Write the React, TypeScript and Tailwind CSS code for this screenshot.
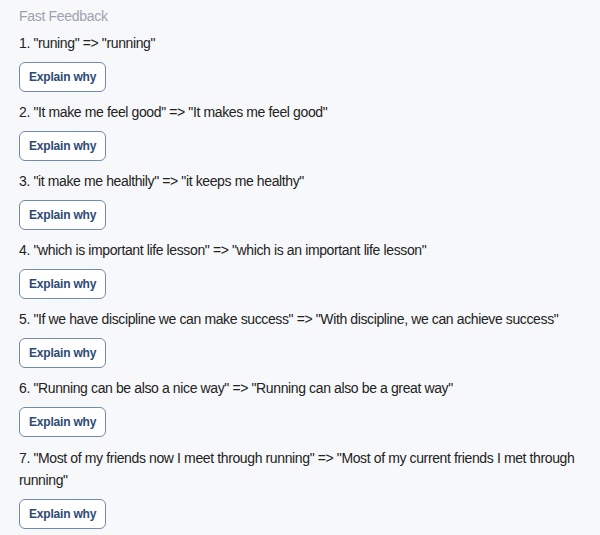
const items: [string, string][] = [
  ["runing", "running"],
  ["It make me feel good", "It makes me feel good"],
  ["it make me healthily", "it keeps me healthy"],
  ["which is important life lesson", "which is an important life lesson"],
  ["If we have discipline we can make success", "With discipline, we can achieve success"],
  ["Running can be also a nice way", "Running can also be a great way"],
  ["Most of my friends now I meet through running", "Most of my current friends I met through running"],
];

export default function App() {
  return (
    <div className="min-h-screen w-full bg-[#f7f8fa] pl-[19px] pr-[8px] pt-[5px] font-['Liberation_Sans',Arial,sans-serif]">
      <h2 className="mb-[5px] text-[14px] leading-[22px] tracking-[-0.3px] text-[#9ca3af]">Fast Feedback</h2>
      <ol className="flex flex-col gap-[9.6px]">
        {items.map(([from, to], index) => (
          <li key={index} className="flex flex-col items-start">
            <p className="text-[14px] leading-[22.5px] tracking-[-0.38px] text-[#222]">
              {index + 1}. "{from}" =&gt; "{to}"
            </p>
            <button className="mt-[7px] h-[30px] rounded-[6px] border border-[#6f8bb0] bg-white px-[9px] text-[12px] font-bold tracking-[-0.2px] text-[#2c4a75]">
              Explain why
            </button>
          </li>
        ))}
      </ol>
    </div>
  );
}
